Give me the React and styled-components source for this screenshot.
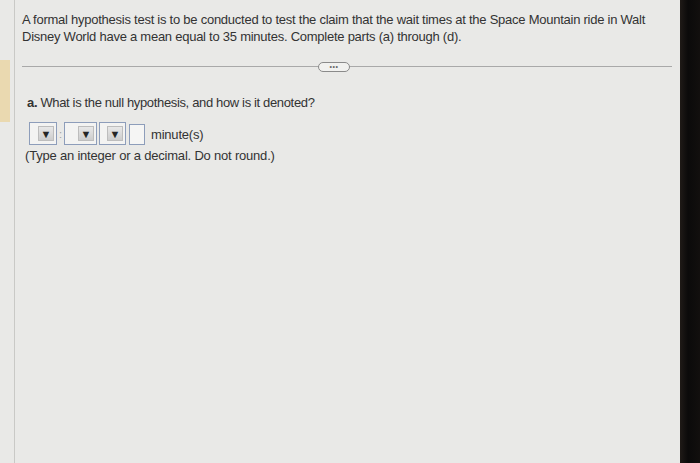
import React from 'react';
import styled, { createGlobalStyle } from 'styled-components';

const Global = createGlobalStyle`
  html, body {
    margin: 0;
    padding: 0;
    background: #e8e8e6;
  }
  body {
    font-family: "Liberation Sans", Arial, sans-serif;
  }
`;

const Screen = styled.div`
  display: flex;
  width: 700px;
  height: 463px;
  overflow: hidden;
  background: #e9e9e7;
`;

const Rail = styled.div`
  width: 14px;
  flex-shrink: 0;
  border-right: 1px solid #c9c9c6;
  padding-top: 60px;
  .tab {
    height: 62px;
    width: 10px;
    background: #ead9b0;
  }
`;

const Main = styled.div`
  flex: 1;
  padding: 11px 0 0 7px;
  color: #333;
  font-size: 13px;
`;

const Bezel = styled.div`
  width: 20px;
  flex-shrink: 0;
  background: linear-gradient(90deg, #1f1a17, #0b0a0a 40%, #120f0e);
`;

const Intro = styled.p`
  margin: 0;
  line-height: 17px;
  letter-spacing: -0.25px;
  max-width: 640px;
`;

const Divider = styled.div`
  position: relative;
  margin: 21px 8px 0 0;
  height: 1px;
  background: #a9a9a9;
  .pill {
    position: absolute;
    left: 296px;
    top: -4px;
    width: 30px;
    height: 8px;
    border: 1px solid #8a8a8a;
    border-radius: 6px;
    background: #f1f1ef;
    font-size: 7px;
    line-height: 7px;
    text-align: center;
    color: #666;
    letter-spacing: 0.5px;
  }
`;

const Question = styled.p`
  margin: 28px 0 0 5px;
  line-height: 16px;
  letter-spacing: -0.35px;
  b {
    font-weight: bold;
  }
`;

const AnswerRow = styled.div`
  display: flex;
  align-items: center;
  margin: 11px 0 0 7px;
  height: 23px;
`;

const Select = styled.div`
  display: flex;
  justify-content: flex-end;
  align-items: stretch;
  width: ${p => p.$w}px;
  height: 23px;
  border: 1px solid #8d9dba;
  background: #f3f3f2;
  padding: 3px 2px 3px 0;
  box-sizing: border-box;
  margin-right: ${p => p.$gap || 0}px;
  .btn {
    width: 14px;
    background: linear-gradient(#e8e8e8, #cdcdcd);
    border: 1px solid #bdbdbd;
    display: flex;
    align-items: center;
    justify-content: center;
    font-size: 11px;
    color: #262626;
  }
`;

const Colon = styled.span`
  width: 7px;
  text-align: center;
  color: #a0a0a0;
  font-size: 11px;
`;

const TextBox = styled.div`
  width: 16px;
  height: 21px;
  border: 1px solid #8d9dba;
  background: #f5f5f4;
  box-sizing: border-box;
  margin: 2px 6px 0 3px;
`;

const Unit = styled.span`
  font-size: 13px;
  letter-spacing: -0.2px;
  padding-top: 2px;
`;

const Hint = styled.p`
  margin: 3px 0 0 3px;
  line-height: 16px;
  letter-spacing: -0.2px;
`;

export default function App() {
  return (
    <Screen>
      <Global />
      <Rail>
        <div className="tab" />
      </Rail>
      <Main>
        <Intro>
          A formal hypothesis test is to be conducted to test the claim that the wait times at the Space Mountain ride in Walt
          Disney World have a mean equal to 35 minutes. Complete parts (a) through (d).
        </Intro>
        <Divider>
          <span className="pill">•••</span>
        </Divider>
        <Question>
          <b>a.</b> What is the null hypothesis, and how is it denoted?
        </Question>
        <AnswerRow>
          <Select $w={28}>
            <span className="btn">▼</span>
          </Select>
          <Colon>:</Colon>
          <Select $w={33} $gap={2}>
            <span className="btn">▼</span>
          </Select>
          <Select $w={27}>
            <span className="btn">▼</span>
          </Select>
          <TextBox />
          <Unit>minute(s)</Unit>
        </AnswerRow>
        <Hint>(Type an integer or a decimal. Do not round.)</Hint>
      </Main>
      <Bezel />
    </Screen>
  );
}
